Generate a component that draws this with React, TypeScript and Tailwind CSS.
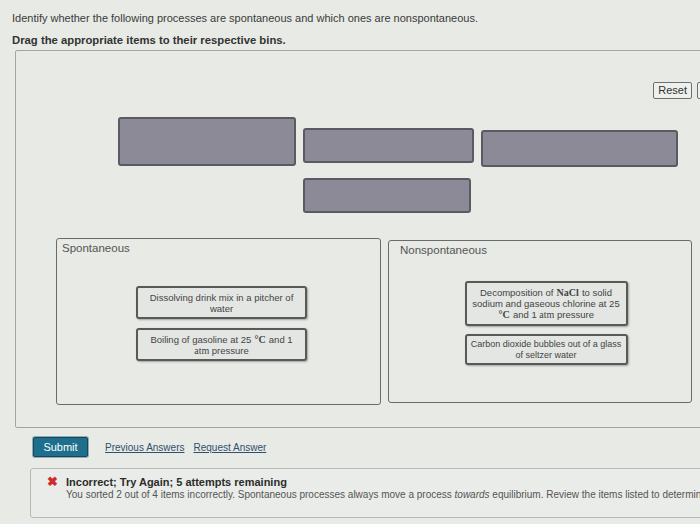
export default function App() {
  const serif = "font-['Liberation_Serif',serif] font-bold text-[10px] leading-[11px] px-[0.5px]";
  const serifReg = "font-['Liberation_Serif',serif] text-[10px] leading-[11px]";
  return (
    <div className="w-[700px] h-[524px] overflow-hidden bg-[#e7eae5] font-['Liberation_Sans',Arial,sans-serif] text-[#333]">
      {/* Instructions */}
      <div className="pl-[12px] pt-[11px]">
        <p className="text-[11px] leading-[14px] text-[#3a3a3a] whitespace-nowrap">
          Identify whether the following processes are spontaneous and which ones are nonspontaneous.
        </p>
        <p className="mt-[8px] text-[11.3px] leading-[14px] font-bold text-[#333] whitespace-nowrap">
          Drag the appropriate items to their respective bins.
        </p>
      </div>

      {/* Sorting area */}
      <div className="mt-[3px] ml-[15px] w-[720px] h-[378px] border border-[#a3a6a2] rounded-[2px]">
        <div className="flex justify-end gap-[5px] pt-[31px] pr-[7px]">
          <button className="h-[17px] px-[4px] text-[11px] leading-[15px] text-[#333] bg-[#eef0ee] border border-[#6f6f6f] rounded-[2px]">
            Reset
          </button>
          <button className="h-[17px] w-[30px] bg-[#eef0ee] border border-[#6f6f6f] rounded-[2px]" />
        </div>

        {/* Empty slots */}
        <div className="mt-[18px] pl-[102px] grid grid-cols-[178px_171px_197px] gap-x-[7px] gap-y-[11px] items-start">
          <div className="h-[49px] bg-[#8b8a96] border-2 border-[#5b5a63] rounded-[3px]" />
          <div className="mt-[11px] h-[35px] bg-[#8b8a96] border-2 border-[#5b5a63] rounded-[3px]" />
          <div className="mt-[13px] h-[37px] bg-[#8b8a96] border-2 border-[#5b5a63] rounded-[3px]" />
          <div className="col-start-2 w-[168px] h-[35px] bg-[#8b8a96] border-2 border-[#5b5a63] rounded-[3px]" />
        </div>

        {/* Bins */}
        <div className="mt-[25px] pl-[40px] flex gap-[7px] items-start">
          <div className="w-[325px] h-[167px] border-[1.5px] border-[#6a6c6a] rounded-[3px] flex flex-col">
            <div className="pl-[5px] pt-[2px] text-[11.5px] leading-[14px] text-[#555]">Spontaneous</div>
            <div className="mt-[31px] flex flex-col items-center gap-[9px] pl-[6px]">
              <Item cls="w-[171px] h-[33px] px-[7px] text-[9.5px]">
                Dissolving drink mix in a pitcher of water
              </Item>
              <Item cls="w-[171px] h-[33px] px-[9px] text-[9.5px]">
                Boiling of gasoline at 25 <span className={serif}>°C</span> and 1{" "}
                <span className={serifReg}>atm</span> pressure
              </Item>
            </div>
          </div>

          <div className="mt-[2px] w-[304px] h-[163px] border-[1.5px] border-[#6a6c6a] rounded-[3px] flex flex-col">
            <div className="pl-[11px] pt-[2px] text-[11.5px] leading-[14px] text-[#555]">Nonspontaneous</div>
            <div className="mt-[24px] flex flex-col items-center gap-[8px] pl-[12px]">
              <Item cls="w-[163px] h-[45px] px-[3px] text-[9.5px]">
                Decomposition of <span className={serif}>NaCl</span> to solid sodium and gaseous chlorine at 25{" "}
                <span className={serif}>°C</span> and 1 <span className={serifReg}>atm</span> pressure
              </Item>
              <Item cls="w-[163px] h-[31px] px-[4px] text-[9px]">
                Carbon dioxide bubbles out of a glass of seltzer water
              </Item>
            </div>
          </div>
        </div>
      </div>

      {/* Actions */}
      <div className="mt-[9px] pl-[33px] flex items-center gap-[17px]">
        <button className="w-[55px] h-[20px] text-[11px] text-white bg-[#1d6f8d] border border-[#0e4b62] rounded-[2px] shadow-[0_0_0_1px_#9aa]">
          Submit
        </button>
        <div className="flex gap-[9px] text-[10px] underline text-[#30506e]">
          <span>Previous Answers</span>
          <span>Request Answer</span>
        </div>
      </div>

      {/* Feedback */}
      <div className="mt-[11px] ml-[30px] w-[700px] h-[50px] border border-[#b7bab6] rounded-[3px] bg-[#e9ece8] flex gap-[8px] pl-[16px] pt-[6px]">
        <span className="text-[#d42a2a] text-[13px] leading-[14px] font-bold">✖</span>
        <div className="whitespace-nowrap">
          <div className="text-[11px] leading-[14px] font-bold text-[#2c2c2c]">
            Incorrect; Try Again; 5 attempts remaining
          </div>
          <div className="text-[10px] leading-[12px] text-[#555]">
            You sorted 2 out of 4 items incorrectly. Spontaneous processes always move a process{" "}
            <i>towards</i> equilibrium. Review the items listed to determine
          </div>
        </div>
      </div>
    </div>
  );
}

function Item({ cls, children }: { cls: string; children: React.ReactNode }) {
  return (
    <div
      className={`${cls} flex items-center justify-center text-center leading-[11px] text-[#444] bg-[#e3e6e2] border-2 border-[#585a58] rounded-[3px] shadow-[1px_1px_2px_rgba(0,0,0,0.3)]`}
    >
      <span>{children}</span>
    </div>
  );
}
